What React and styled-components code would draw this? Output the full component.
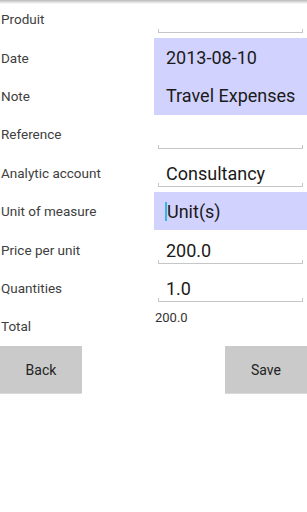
import React from "react";
import styled, { createGlobalStyle } from "styled-components";

const Global = createGlobalStyle`
  html, body { margin: 0; padding: 0; background: #fff; }
  body { font-family: Roboto, "Noto Sans", sans-serif; }
`;

const Screen = styled.div`
  position: relative;
  width: 307px;
  height: 512px;
  background: #fff;
  overflow: hidden;
  &::before {
    content: "";
    position: absolute;
    top: 0; left: 0; right: 0;
    height: 4px;
    background: linear-gradient(#b9b9b9, rgba(255,255,255,0));
    pointer-events: none;
  }
`;

const Row = styled.div`
  display: grid;
  grid-template-columns: 154px 153px;
  height: 38.4px;
`;

const Label = styled.div`
  display: flex;
  align-items: center;
  padding-left: 1px;
  font-size: 13.5px;
  color: #404040;
`;

const Field = styled.div`
  position: relative;
  display: flex;
  align-items: center;
  padding-left: ${p => (p.$cursor ? "11px" : "12px")};
  padding-top: ${p => (p.$active ? "0" : "1px")};
  background: ${p => (p.$active ? "#d2d2ff" : "transparent")};
  font-size: 18px;
  color: #1a1a1a;
`;

const Underline = styled.div`
  position: absolute;
  left: 4px;
  right: 4px;
  bottom: 5px;
  height: 3px;
  border: 1px solid #c6c6c6;
  border-top: none;
`;

const Cursor = styled.span`
  display: inline-block;
  width: 2px;
  height: 19px;
  background: #33b5e5;
`;

const TotalValue = styled.div`
  padding-left: 1px;
  padding-top: 3px;
  font-size: 13px;
  color: #333;
`;

const Buttons = styled.div`
  display: flex;
  justify-content: space-between;
`;

const Button = styled.button`
  width: 82px;
  height: 48px;
  border: none;
  margin: 0;
  padding: 0;
  background: #cacaca;
  box-shadow: inset 0 -1px 0 #dadada;
  font-family: Roboto, sans-serif;
  font-size: 14px;
  color: #222;
`;

const rows = [
  { label: "Produit", value: "" },
  { label: "Date", value: "2013-08-10", active: true },
  { label: "Note", value: "Travel Expenses", active: true },
  { label: "Reference", value: "" },
  { label: "Analytic account", value: "Consultancy" },
  { label: "Unit of measure", value: "Unit(s)", active: true, cursor: true },
  { label: "Price per unit", value: "200.0" },
  { label: "Quantities", value: "1.0" },
];

export default function App() {
  return (
    <>
      <Global />
      <Screen>
        {rows.map(r => (
          <Row key={r.label}>
            <Label>{r.label}</Label>
            <Field $active={r.active} $cursor={r.cursor}>
              {r.cursor && <Cursor />}
              {r.value}
              {!r.active && <Underline />}
            </Field>
          </Row>
        ))}
        <Row>
          <Label>Total</Label>
          <TotalValue>200.0</TotalValue>
        </Row>
        <Buttons>
          <Button>Back</Button>
          <Button>Save</Button>
        </Buttons>
      </Screen>
    </>
  );
}
